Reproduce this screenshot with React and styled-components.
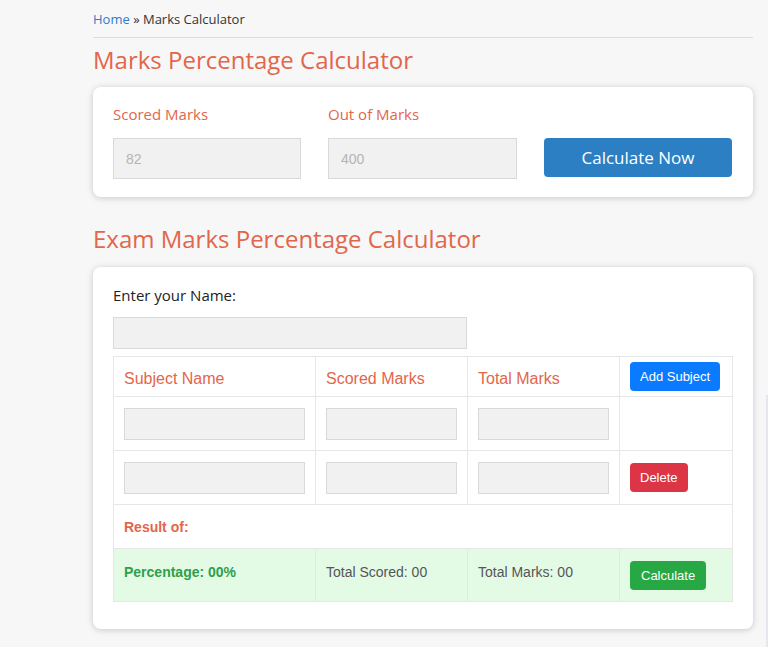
import React, { useState } from "react";
import styled, { createGlobalStyle } from "styled-components";

const GlobalStyle = createGlobalStyle`
  html, body {
    margin: 0;
    padding: 0;
    background: #f7f7f7;
    font-family: "Open Sans", "Noto Sans", sans-serif;
  }
`;

const Page = styled.div`
  display: grid;
  grid-template-columns: 93px 660px 1fr;
  min-height: 647px;
`;

const Main = styled.main`
  grid-column: 2;
  display: flex;
  flex-direction: column;
`;

const Side = styled.aside`
  grid-column: 3;
  margin: 395px 0 0 13px;
  border-left: 2px solid #e6e6ee;
  background: #f4f4f6;
`;

const Breadcrumb = styled.nav`
  font-size: 13px;
  color: #333;
  padding: 10px 0 9px;
  border-bottom: 1px solid #dcdcdc;
  a {
    color: #2d7cc9;
    text-decoration: none;
  }
`;

const Heading = styled.h1`
  margin: ${(p) => (p.$second ? "26px 0 12px" : "6px 0 11px")};
  font-size: 24px;
  font-weight: 400;
  color: #e2664b;
  line-height: 32px;
`;

const Card = styled.section`
  background: #fff;
  border-radius: 8px;
  box-shadow: 0 1px 6px rgba(70, 80, 110, 0.28);
  padding: ${(p) => p.$pad || "20px"};
`;

const QuickRow = styled.div`
  display: grid;
  grid-template-columns: 188px 189px 188px;
  column-gap: 27px;
  align-items: end;
`;

const Field = styled.div`
  display: flex;
  flex-direction: column;
  gap: 15px;
`;

const Label = styled.label`
  font-size: 15px;
  color: #e2664b;
  line-height: 18px;
`;

const Input = styled.input`
  box-sizing: border-box;
  width: ${(p) => p.$w || "100%"};
  height: ${(p) => p.$h || "41px"};
  background: #f1f1f1;
  border: 1px solid #d9d9d9;
  padding: 0 12px;
  font-family: "Liberation Sans", Arial, sans-serif;
  font-size: 14px;
  color: #999;
  outline: none;
  &::placeholder {
    color: #b5b5b5;
  }
`;

const BigButton = styled.button`
  height: 39px;
  margin-bottom: 2px;
  border: none;
  border-radius: 4px;
  background: #2b7fc2;
  color: #fff;
  font-family: "Open Sans", "Noto Sans", sans-serif;
  font-size: 17px;
  cursor: pointer;
`;

const NameLabel = styled.div`
  font-size: 15px;
  color: #222;
  line-height: 20px;
  margin-bottom: 12px;
`;

const Table = styled.table`
  width: 620px;
  margin-top: 7px;
  border-collapse: collapse;
  font-family: "Liberation Sans", Arial, sans-serif;
  td, th {
    border: 1px solid #e6e6e6;
    padding: 0 10px;
    text-align: left;
    vertical-align: middle;
  }
`;

const Th = styled.th`
  height: 39px;
  font-weight: 400;
  font-size: 16px;
  color: #e2664b;
`;

const HeadText = styled.span`
  display: inline-block;
  padding-top: 4px;
`;

const Tr = styled.tr`
  height: ${(p) => p.$h || "54px"};
  background: ${(p) => (p.$green ? "#e3fbe5" : "#fff")};
`;

const Cell = styled.td`
  font-size: 14px;
  color: ${(p) => p.$color || "#555"};
  font-weight: ${(p) => (p.$bold ? 700 : 400)};
  vertical-align: ${(p) => p.$valign || "middle"} !important;
  padding-top: ${(p) => p.$pt || "0"} !important;
`;

const Btn = styled.button`
  display: block;
  height: 29px;
  padding: 0 ${(p) => p.$px || "10px"};
  border: none;
  border-radius: 4px;
  background: ${(p) => p.$bg};
  color: #fff;
  font-family: "Liberation Sans", Arial, sans-serif;
  font-size: 13px;
  cursor: pointer;
`;

export default function App() {
  const [rows, setRows] = useState([1, 2]);
  return (
    <>
      <GlobalStyle />
      <Page>
        <Main>
          <Breadcrumb>
            <a href="#">Home</a> » Marks Calculator
          </Breadcrumb>
          <Heading>Marks Percentage Calculator</Heading>
          <Card $pad="18px 20px 18px">
            <QuickRow>
              <Field>
                <Label>Scored Marks</Label>
                <Input placeholder="82" />
              </Field>
              <Field>
                <Label>Out of Marks</Label>
                <Input placeholder="400" />
              </Field>
              <BigButton>Calculate Now</BigButton>
            </QuickRow>
          </Card>

          <Heading $second>Exam Marks Percentage Calculator</Heading>
          <Card $pad="18px 20px 27px">
            <NameLabel>Enter your Name:</NameLabel>
            <Input $w="354px" $h="32px" />
            <Table>
              <thead>
                <tr>
                  <Th style={{ width: 181 }}>
                    <HeadText>Subject Name</HeadText>
                  </Th>
                  <Th style={{ width: 131 }}>
                    <HeadText>Scored Marks</HeadText>
                  </Th>
                  <Th style={{ width: 131 }}>
                    <HeadText>Total Marks</HeadText>
                  </Th>
                  <Th>
                    <Btn $bg="#0a7bff">Add Subject</Btn>
                  </Th>
                </tr>
              </thead>
              <tbody>
                {rows.map((r, i) => (
                  <Tr key={r}>
                    <Cell>
                      <Input $h="32px" />
                    </Cell>
                    <Cell>
                      <Input $h="32px" />
                    </Cell>
                    <Cell>
                      <Input $h="32px" />
                    </Cell>
                    <Cell>
                      {i > 0 && (
                        <Btn
                          $bg="#dc3545"
                          onClick={() => setRows(rows.filter((x) => x !== r))}
                        >
                          Delete
                        </Btn>
                      )}
                    </Cell>
                  </Tr>
                ))}
                <Tr $h="44px">
                  <Cell colSpan={4} $color="#e2664b" $bold>
                    Result of:
                  </Cell>
                </Tr>
                <Tr $h="53px" $green>
                  <Cell $color="#2f9e4b" $bold $valign="top" $pt="15px">
                    Percentage: 00%
                  </Cell>
                  <Cell $valign="top" $pt="15px">Total Scored: 00</Cell>
                  <Cell $valign="top" $pt="15px">Total Marks: 00</Cell>
                  <Cell>
                    <Btn $bg="#28a745" $px="11px">Calculate</Btn>
                  </Cell>
                </Tr>
              </tbody>
            </Table>
          </Card>
        </Main>
        <Side />
      </Page>
    </>
  );
}
